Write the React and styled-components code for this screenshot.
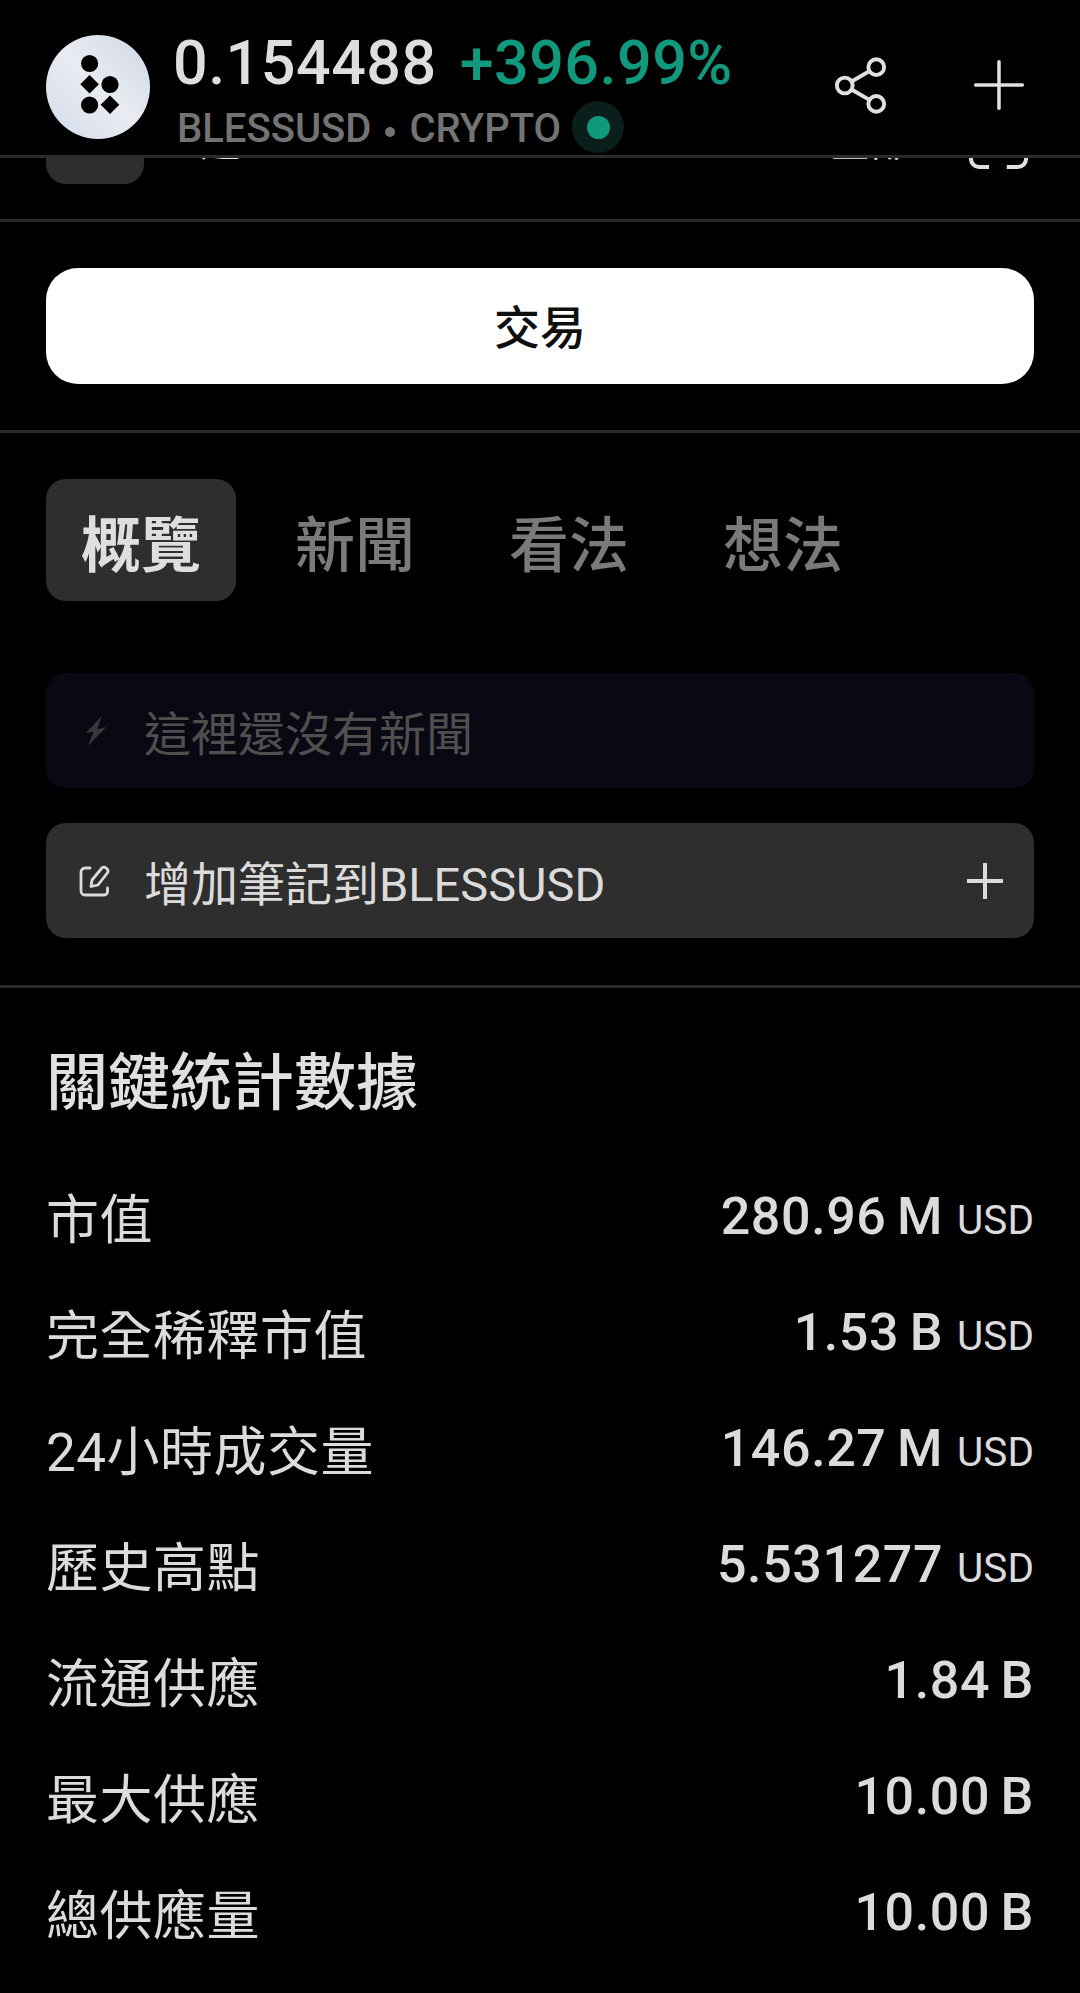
import React from "react";
import styled, { createGlobalStyle } from "styled-components";
import { Share2, Plus } from "lucide-react";

const FONT = `Roboto, "Noto Sans CJK TC", "Noto Sans", sans-serif`;

const Global = createGlobalStyle`
  html, body { margin: 0; padding: 0; background: #000; }
  body { font-family: ${FONT}; color: #dbdbdb; }
`;

const Page = styled.div`
  width: 1080px;
  height: 1993px;
  overflow: hidden;
  background: #000;
`;

const Header = styled.header`
  height: 155px;
  box-sizing: border-box;
  display: flex;
  align-items: flex-start;
  padding: 35px 41px 0 46px;
`;

const Logo = styled.svg`
  width: 104px;
  height: 104px;
  flex: none;
`;

const Quote = styled.div`
  margin-left: 23px;
  flex: 1;
  min-width: 0;
`;

const PriceLine = styled.div`
  display: flex;
  align-items: baseline;
  gap: 23px;
  font-size: 61px;
  line-height: 56px;
  font-weight: 500;
`;

const Price = styled.span`
  color: #dedede;
  letter-spacing: 0.5px;
`;

const Change = styled.span`
  color: #10997d;
  letter-spacing: 0.5px;
`;

const SubLine = styled.div`
  display: flex;
  align-items: center;
  margin: 10px 0 0 4px;
  height: 52px;
  font-size: 40px;
  font-weight: 500;
  color: #737373;
`;

const SubText = styled.span`
  padding-top: 3px;
`;

const Bullet = styled.span`
  width: 10px;
  height: 10px;
  margin: 9px 14px 0;
  border-radius: 50%;
  background: #737373;
`;

const LiveDot = styled.span`
  width: 52px;
  height: 52px;
  margin-left: 11px;
  border-radius: 50%;
  background: #0a1f1b;
  display: flex;
  align-items: center;
  justify-content: center;
  &::after {
    content: "";
    width: 23px;
    height: 23px;
    border-radius: 50%;
    background: #10997d;
  }
`;

const HeaderActions = styled.div`
  display: flex;
  align-items: center;
  gap: 67px;
  height: 80px;
  margin-top: 10px;
  color: #e0e0e0;
`;

const Rule = styled.div`
  height: 3px;
  background: #2a2a2a;
`;

const ChartStub = styled.div`
  position: relative;
  height: 61px;
  overflow: hidden;
`;

const StubTile = styled.div`
  width: 98px;
  height: 26px;
  margin-left: 46px;
  background: #2e2e2e;
  border-radius: 0 0 20px 20px;
`;

/* Range labels of the chart scrolled away beneath the header */
const StubLabel = styled.span`
  position: absolute;
  top: -39px;
  left: ${(p) => p.$left}px;
  font-size: 40px;
  line-height: 48px;
  color: #e0e0e0;
`;

const StubBracket = styled.div`
  position: absolute;
  right: 52px;
  top: -23px;
  width: 59px;
  height: 34px;
  box-sizing: border-box;
  border: 4px solid #e0e0e0;
  border-radius: 10px;
  clip-path: polygon(0 0, 34% 0, 34% 100%, 64% 100%, 64% 0, 100% 0, 100% 100%, 0 100%);
`;

const TradeSection = styled.div`
  padding: 46px;
`;

const TradeButton = styled.button`
  display: block;
  width: 100%;
  height: 116px;
  border: 0;
  padding: 4px 0 0;
  border-radius: 32px;
  background: #fff;
  color: #0f0f0f;
  font: 500 46px/1 ${FONT};
`;

const TabBar = styled.nav`
  display: flex;
  padding: 46px 46px 0;
  gap: 24px;
`;

const Tab = styled.div`
  width: 190px;
  height: 122px;
  display: flex;
  align-items: center;
  justify-content: center;
  border-radius: 20px;
  font-size: 60px;
  font-weight: ${(p) => (p.$active ? 700 : 500)};
  color: ${(p) => (p.$active ? "#dedede" : "#7a7a7a")};
  background: ${(p) => (p.$active ? "#2e2e2e" : "transparent")};
`;

const Panels = styled.div`
  padding: 72px 46px 47px;
  display: flex;
  flex-direction: column;
  gap: 35px;
`;

const Panel = styled.div`
  height: 115px;
  border-radius: 20px;
  display: flex;
  align-items: center;
  padding: 0 31px 0 30px;
  font-size: 47px;
  background: ${(p) => (p.$muted ? "#0a0813" : "#2e2e2e")};
  color: ${(p) => (p.$muted ? "#4f4f4f" : "#dbdbdb")};
`;

const PanelIcon = styled.span`
  width: 68px;
  flex: none;
  display: flex;
  padding-left: ${(p) => p.$inset || 0}px;
  box-sizing: border-box;
`;

const PanelText = styled.span`
  flex: 1;
`;

const Stats = styled.section`
  padding: 0 46px;
`;

const StatsTitle = styled.h2`
  margin: 58px 0 36px;
  font-size: 62px;
  line-height: 76px;
  font-weight: 500;
  color: #e0e0e0;
`;

const StatRow = styled.div`
  display: flex;
  justify-content: space-between;
  align-items: center;
  height: 116px;
`;

const StatLabel = styled.span`
  font-size: 53px;
  color: #dbdbdb;
  letter-spacing: 0.5px;
`;

const StatValue = styled.span`
  font-size: 52px;
  font-weight: 500;
  color: #dbdbdb;
  letter-spacing: 0.6px;
  word-spacing: -3px;
`;

const StatUnit = styled.span`
  font-size: 40.5px;
  font-weight: 400;
  margin-left: 14px;
  letter-spacing: 0;
`;

const STATS = [
  ["市值", "280.96 M", "USD"],
  ["完全稀釋市值", "1.53 B", "USD"],
  ["24小時成交量", "146.27 M", "USD"],
  ["歷史高點", "5.531277", "USD"],
  ["流通供應", "1.84 B"],
  ["最大供應", "10.00 B"],
  ["總供應量", "10.00 B"],
];

const BoltIcon = () => (
  <svg width="24" height="30" viewBox="0 0 20 26">
    <path d="M15 0 L1 15 L8 13.500 L3 26 L19 9.500 L11 11.500 Z" fill="#38383c" />
  </svg>
);

const NoteIcon = () => (
  <svg width="31" height="32" viewBox="0 0 31 32" fill="none" stroke="currentColor" strokeWidth="2.8" strokeLinecap="round" strokeLinejoin="round">
    <path d="M11 3H6a4 4 0 0 0-4 4v19a4 4 0 0 0 4 4h19a3.500 3.500 0 0 0 3.500-3.500V23" />
    <path d="M12 21.500 13 15 22.500 3.500a3 3 0 0 1 4.500-.5l1 .8a3 3 0 0 1 .3 4.200L19 20z" />
  </svg>
);

const PlusGlyph = () => (
  <svg width="36" height="36" viewBox="0 0 36 36" stroke="currentColor" strokeWidth="4">
    <path d="M18 0V36M0 18H36" />
  </svg>
);

export default function App() {
  return (
    <Page>
      <Global />
      <Header>
        <Logo viewBox="0 0 104 104">
          <defs>
            <linearGradient id="disc" x1="0" y1="1" x2="1" y2="0">
              <stop offset="0" stopColor="#d3dbeb" />
              <stop offset="0.5" stopColor="#e9ebf1" />
              <stop offset="1" stopColor="#cfd7e6" />
            </linearGradient>
          </defs>
          <circle cx="52" cy="52" r="52" fill="url(#disc)" />
          <circle cx="43.600" cy="28.500" r="8.600" fill="#000" />
          <path d="M43.600 40l9.300 9.300-9.300 9.300-9.300-9.300z" fill="#000" />
          <circle cx="64" cy="49.500" r="8.600" fill="#000" />
          <circle cx="43.600" cy="70" r="8.600" fill="#000" />
          <path d="M64 60.500l9.300 9.300-9.300 9.300-9.300-9.300z" fill="#000" />
        </Logo>
        <Quote>
          <PriceLine>
            <Price>0.154488</Price>
            <Change>+396.99%</Change>
          </PriceLine>
          <SubLine>
            <SubText>BLESSUSD</SubText>
            <Bullet />
            <SubText>CRYPTO</SubText>
            <LiveDot />
          </SubLine>
        </Quote>
        <HeaderActions>
          <Share2 size={63} strokeWidth={1.5} />
          <Plus size={80} strokeWidth={1.05} />
        </HeaderActions>
      </Header>
      <Rule />
      <ChartStub>
        <StubTile />
        <StubLabel $left={178}>1週</StubLabel>
        <StubLabel $left={830}>全部</StubLabel>
        <StubBracket />
      </ChartStub>
      <Rule />
      <TradeSection>
        <TradeButton>交易</TradeButton>
      </TradeSection>
      <Rule />
      <TabBar>
        <Tab $active>概覽</Tab>
        <Tab>新聞</Tab>
        <Tab>看法</Tab>
        <Tab>想法</Tab>
      </TabBar>
      <Panels>
        <Panel $muted>
          <PanelIcon $inset={8}>
            <BoltIcon />
          </PanelIcon>
          <PanelText>這裡還沒有新聞</PanelText>
        </Panel>
        <Panel>
          <PanelIcon $inset={3}>
            <NoteIcon />
          </PanelIcon>
          <PanelText>增加筆記到BLESSUSD</PanelText>
          <PlusGlyph />
        </Panel>
      </Panels>
      <Rule />
      <Stats>
        <StatsTitle>關鍵統計數據</StatsTitle>
        {STATS.map(([label, value, unit]) => (
          <StatRow key={label}>
            <StatLabel>{label}</StatLabel>
            <StatValue>
              {value}
              {unit && <StatUnit>{unit}</StatUnit>}
            </StatValue>
          </StatRow>
        ))}
      </Stats>
    </Page>
  );
}
